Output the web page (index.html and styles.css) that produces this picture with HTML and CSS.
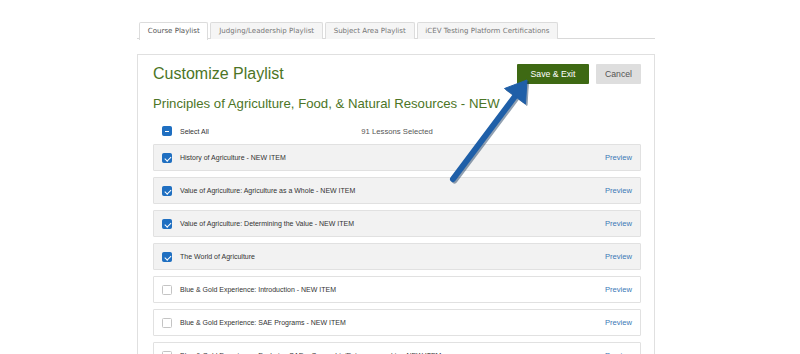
FILE: index.html
```html
<!DOCTYPE html>
<html lang="en">
<head>
<meta charset="utf-8">
<title>Customize Playlist</title>
<link rel="stylesheet" href="styles.css">
</head>
<body>
<div class="page">
  <div class="tabs">
    <div class="tab active">Course Playlist</div>
    <div class="tab">Judging/Leadership Playlist</div>
    <div class="tab">Subject Area Playlist</div>
    <div class="tab">iCEV Testing Platform Certifications</div>
  </div>
  <div class="panel">
    <div class="head">
      <h1 class="title">Customize Playlist</h1>
      <div class="actions">
        <button class="btn save">Save &amp; Exit</button>
        <button class="btn cancel">Cancel</button>
      </div>
    </div>
    <h2 class="subtitle">Principles of Agriculture, Food, &amp; Natural Resources - NEW</h2>
    <div class="select-all">
      <div class="sa-left"><span class="cb minus"></span><span class="label">Select All</span></div>
      <span class="count">91 Lessons Selected</span>
      <span></span>
    </div>
    <ul class="lessons">
      <li class="row checked"><span class="cb on"></span><span class="name">History of Agriculture - NEW ITEM</span><a class="preview">Preview</a></li>
      <li class="row checked"><span class="cb on"></span><span class="name">Value of Agriculture: Agriculture as a Whole - NEW ITEM</span><a class="preview">Preview</a></li>
      <li class="row checked"><span class="cb on"></span><span class="name">Value of Agriculture: Determining the Value - NEW ITEM</span><a class="preview">Preview</a></li>
      <li class="row checked"><span class="cb on"></span><span class="name">The World of Agriculture</span><a class="preview">Preview</a></li>
      <li class="row"><span class="cb"></span><span class="name">Blue &amp; Gold Experience: Introduction - NEW ITEM</span><a class="preview">Preview</a></li>
      <li class="row"><span class="cb"></span><span class="name">Blue &amp; Gold Experience: SAE Programs - NEW ITEM</span><a class="preview">Preview</a></li>
      <li class="row"><span class="cb"></span><span class="name">Blue &amp; Gold Experience: Exploring SAE – Ownership/Entrepreneurship - NEW ITEM</span><a class="preview">Preview</a></li>
    </ul>
  </div>
  <svg class="arrow" width="800" height="354" viewBox="0 0 800 354">
    <g transform="translate(1.5,1.5)" fill="#0d2f55" stroke="#0d2f55" opacity="0.45">
      <line x1="453" y1="179" x2="516" y2="95" stroke-width="6" stroke-linecap="round"/>
      <polygon points="527,80 504.5,88.5 525.5,104" stroke-width="1"/>
    </g>
    <g fill="#1f5fa8" stroke="#1f5fa8">
      <line x1="453" y1="179" x2="516" y2="95" stroke-width="6" stroke-linecap="round"/>
      <polygon points="527,80 504.5,88.5 525.5,104" stroke-width="1" stroke-linejoin="round"/>
    </g>
  </svg>
</div>
</body>
</html>
```
FILE: styles.css
```css
* { box-sizing: border-box; }
html, body { margin: 0; padding: 0; background: #fff; }
body { font-family: "Liberation Sans", Arial, sans-serif; color: #333; overflow: hidden; height: 354px; }

.page { width: 518px; margin-left: 137px; padding-top: 22px; }

.tabs { display: flex; gap: 2px; padding-left: 2px; border-bottom: 1px solid #d9d9d9; height: 17px; }
.tab {
  font-family: "DejaVu Sans", Verdana, sans-serif; font-size: 7.05px; color: #777;
  height: 17px; line-height: 16px; padding: 0 7.8px;
  border: 1px solid #dcdcdc; border-bottom: none; background: #f5f5f5;
  border-radius: 2px 2px 0 0; white-space: nowrap;
}
.tab.active { background: #fff; color: #555; height: 18px; }

.panel { margin-top: 15px; border: 1px solid #e0e0e0; border-bottom: none; padding: 9px 13px 0 15px; height: 320px; }

.head { display: flex; justify-content: space-between; align-items: flex-start; }
.title { margin: 0; font-size: 16px; line-height: 20px; font-weight: normal; color: #4c7526; }
.actions { display: flex; gap: 7px; }
.btn { font-family: "Liberation Sans", Arial, sans-serif; font-size: 8.7px; height: 20px; border: none; border-radius: 1px; padding: 0; }
.save { width: 72px; background: #3e6913; color: #fff; }
.cancel { width: 45px; background: #dedede; color: #555; }

.subtitle { margin: 12px 0 0; font-size: 13.2px; line-height: 16px; font-weight: normal; color: #4c7526; }

.select-all { display: grid; grid-template-columns: 1fr auto 1fr; align-items: center; margin-top: 11px; height: 16px; }
.sa-left { display: flex; align-items: center; gap: 8px; padding-left: 9px; }
.label { font-size: 7px; color: #333; }
.count { font-size: 7.7px; color: #555; }

.lessons { list-style: none; margin: 5px 0 0; padding: 0; display: flex; flex-direction: column; gap: 6px; }
.row { display: flex; align-items: center; height: 27px; border: 1px solid #e1e1e1; padding: 0 8px; background: #fff; border-radius: 1px; }
.row.checked { background: #f2f2f2; }
.name { flex: 1; margin-left: 8px; font-size: 7px; color: #333; white-space: nowrap; }
.preview { font-size: 7.6px; color: #3a78b6; }

.cb { width: 10px; height: 10px; border: 1px solid #c4c4c4; border-radius: 1.5px; background: #fff; flex: none; position: relative; }
.cb.on, .cb.minus { background: #1f6fc1; border-color: #1f6fc1; }
.cb.minus::after { content: ""; position: absolute; left: 2px; right: 2px; top: 3.5px; height: 1.5px; background: #fff; }
.cb.on::after {
  content: ""; position: absolute; left: 3px; top: 1px; width: 2.5px; height: 5px;
  border: solid #fff; border-width: 0 1.3px 1.3px 0; transform: rotate(45deg);
}

.arrow { position: absolute; left: 0; top: 0; pointer-events: none; }
```
